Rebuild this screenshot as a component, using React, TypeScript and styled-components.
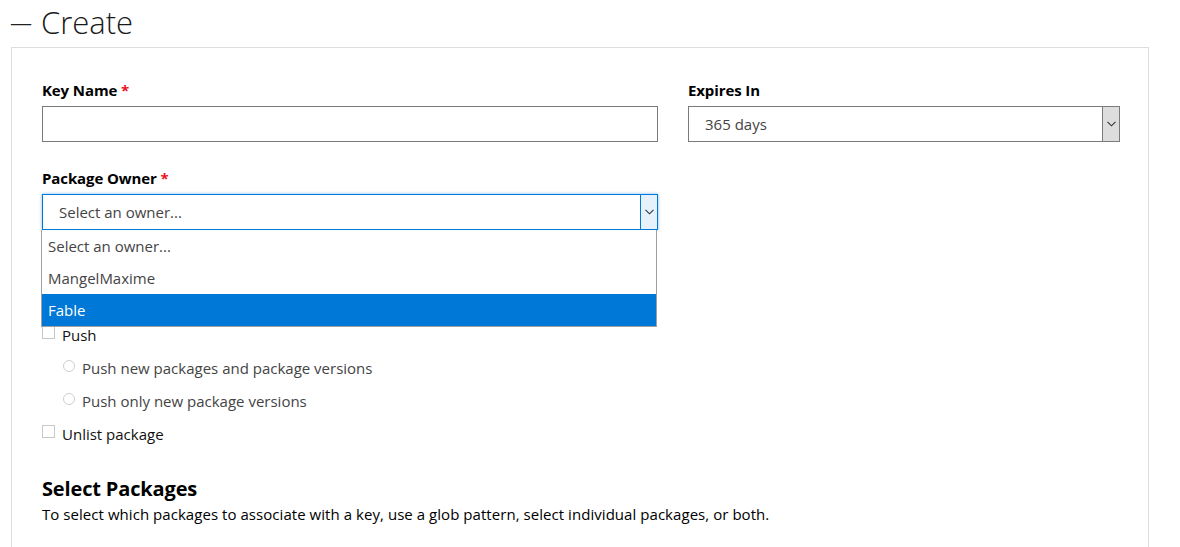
import React from 'react';
import styled, { createGlobalStyle } from 'styled-components';

const GlobalStyle = createGlobalStyle`
  body {
    margin: 0;
    background: #fff;
    font-family: 'Open Sans', 'Noto Sans', sans-serif;
    color: #000;
  }
`;

interface Owner {
  name: string;
  selected?: boolean;
}

const owners: Owner[] = [
  { name: 'Select an owner...' },
  { name: 'MangelMaxime' },
  { name: 'Fable', selected: true },
];

const Chevron: React.FC = () => (
  <svg width="9" height="6" viewBox="0 0 9 6">
    <path d="M0.5 0.8 L4.5 4.8 L8.5 0.8" fill="none" stroke="#333" strokeWidth="1.1" />
  </svg>
);

export default function App() {
  return (
    <Page>
      <GlobalStyle />
      <Header>
        <Toggle>—</Toggle>
        <HeaderTitle>Create</HeaderTitle>
      </Header>
      <Panel>
        <FieldRow>
          <Field>
            <Label>
              Key Name <Required>*</Required>
            </Label>
            <TextInput />
          </Field>
          <Field>
            <Label>Expires In</Label>
            <SelectBox>
              <SelectValue>365 days</SelectValue>
              <ArrowBox>
                <Chevron />
              </ArrowBox>
            </SelectBox>
          </Field>
        </FieldRow>

        <OwnerField>
          <Label>
            Package Owner <Required>*</Required>
          </Label>
          <SelectBox focused>
            <SelectValue>Select an owner...</SelectValue>
            <ArrowBox focused>
              <Chevron />
            </ArrowBox>
          </SelectBox>
          {/* open dropdown, lies over the scopes heading */}
          <OptionList>
            {owners.map((o) => (
              <Option key={o.name} selected={o.selected}>
                {o.name}
              </Option>
            ))}
          </OptionList>
        </OwnerField>

        <ScopesTitle>Select Scopes</ScopesTitle>

        <CheckRow>
          <CheckBox />
          <span>Push</span>
        </CheckRow>
        <RadioRow>
          <Radio />
          <span>Push new packages and package versions</span>
        </RadioRow>
        <RadioRow>
          <Radio />
          <span>Push only new package versions</span>
        </RadioRow>
        <CheckRow>
          <CheckBox />
          <span>Unlist package</span>
        </CheckRow>

        <SectionTitle>Select Packages</SectionTitle>
        <Description>
          To select which packages to associate with a key, use a glob pattern, select individual packages, or both.
        </Description>
      </Panel>
    </Page>
  );
}

const Page = styled.div`
  width: 1180px;
  height: 547px;
  overflow: hidden;
`;

const Header = styled.div`
  display: flex;
  align-items: center;
  height: 43px;
  padding-left: 10px;
`;

const Toggle = styled.span`
  font-size: 26px;
  font-weight: 300;
  color: #222;
  width: 31px;
  transform: scaleX(0.85);
  transform-origin: left center;
`;

const HeaderTitle = styled.h1`
  margin: 0;
  font-size: 31px;
  font-weight: 300;
  color: #1a1a1a;
`;

const Panel = styled.div`
  margin-left: 11px;
  margin-top: 4px;
  width: 1138px;
  border: 1px solid #dddddd;
  border-bottom: none;
  padding: 32px 30px 40px 30px;
  box-sizing: border-box;
  height: 600px;
`;

const FieldRow = styled.div`
  display: grid;
  grid-template-columns: 616px 432px;
  column-gap: 30px;
`;

const Field = styled.div`
  display: flex;
  flex-direction: column;
`;

const OwnerField = styled.div`
  position: relative;
  width: 616px;
  margin-top: 26px;
  display: flex;
  flex-direction: column;
`;

const Label = styled.label`
  font-size: 15px;
  font-weight: 700;
  line-height: 20px;
  margin-bottom: 6px;
  letter-spacing: -0.1px;
`;

const Required = styled.span`
  color: #e81123;
`;

const TextInput = styled.div`
  height: 36px;
  box-sizing: border-box;
  border: 1px solid #7a7a7a;
  background: #fff;
`;

const SelectBox = styled.div<{ focused?: boolean }>`
  height: 36px;
  box-sizing: border-box;
  border: 1px solid ${(p) => (p.focused ? '#0078d7' : '#7a7a7a')};
  box-shadow: ${(p) => (p.focused ? '0 0 3px rgba(0,120,215,0.55)' : 'none')};
  display: flex;
  align-items: center;
  background: #fff;
`;

const SelectValue = styled.div`
  flex: 1;
  padding-left: 16px;
  font-size: 15px;
  color: #444;
`;

const ArrowBox = styled.div<{ focused?: boolean }>`
  width: 17px;
  align-self: stretch;
  display: flex;
  align-items: center;
  justify-content: center;
  background: ${(p) => (p.focused ? '#e5f1fb' : '#dddddd')};
  border-left: 1px solid ${(p) => (p.focused ? '#0078d7' : '#7a7a7a')};
  box-sizing: border-box;
`;

const OptionList = styled.div`
  position: absolute;
  left: -1px;
  top: 62px;
  width: 616px;
  box-sizing: border-box;
  border: 1px solid #a0a0a0;
  border-top: none;
  background: #fff;
  z-index: 2;
`;

const Option = styled.div<{ selected?: boolean }>`
  height: 32px;
  display: flex;
  align-items: center;
  padding-left: 6px;
  font-size: 15px;
  color: ${(p) => (p.selected ? '#fff' : '#444')};
  background: ${(p) => (p.selected ? '#0078d7' : '#fff')};
`;

const ScopesTitle = styled.h2`
  margin: 30px 0 8px 0;
  font-size: 20px;
  font-weight: 700;
  line-height: 28px;
  height: 50px;
`;

const CheckRow = styled.div`
  display: flex;
  align-items: center;
  height: 33px;
  font-size: 15px;
  color: #111;
`;

const CheckBox = styled.span`
  width: 13px;
  height: 13px;
  box-sizing: border-box;
  border: 1px solid #c8c8c8;
  margin-right: 7px;
  margin-top: -5px;
`;

const RadioRow = styled(CheckRow)`
  padding-left: 21px;
  color: #444;
`;

const Radio = styled.span`
  width: 12px;
  height: 12px;
  box-sizing: border-box;
  border: 1px solid #cfcfcf;
  border-radius: 50%;
  margin-right: 7px;
  margin-top: -3px;
`;

const SectionTitle = styled.h2`
  margin: 26px 0 0 0;
  font-size: 20px;
  font-weight: 700;
  line-height: 26px;
  letter-spacing: -0.15px;
`;

const Description = styled.p`
  margin: 0;
  font-size: 15px;
  line-height: 24px;
  letter-spacing: 0.05px;
`;
